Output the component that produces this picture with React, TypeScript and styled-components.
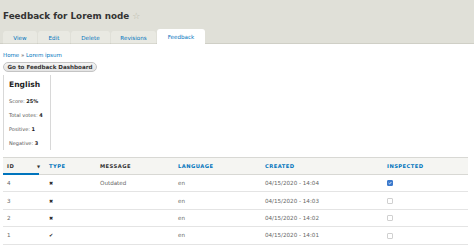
import React from "react";
import styled, { createGlobalStyle } from "styled-components";

const Global = createGlobalStyle`
  html, body { margin: 0; padding: 0; background: #fff; }
  body { font-family: "DejaVu Sans", Verdana, sans-serif; color: #333; width: 474px; height: 250px; overflow: hidden; }
`;

const Header = styled.div`
  background: #e0e0d8;
  height: 44px;
  border-bottom: 1px solid #cfcfc6;
  display: flex;
  flex-direction: column;
  justify-content: space-between;
  padding: 0 3px;
  box-sizing: border-box;
`;

const Title = styled.h1`
  margin: 10px 0 0 0;
  font-size: 8.8px;
  font-weight: bold;
  color: #333;
  line-height: 12px;
  display: flex;
  align-items: center;
  gap: 3px;
`;

const Star = styled.span`
  font-size: 9px;
  color: #b8b8a8;
  font-weight: normal;
`;

const Tabs = styled.ul`
  list-style: none;
  margin: 0 0 -1px 0;
  padding: 0;
  display: flex;
  gap: 1px;
`;

const Tab = styled.li<{ $active?: boolean; $w: number }>`
  width: ${(p) => p.$w}px;
  height: ${(p) => (p.$active ? 15 : 13)}px;
  margin-top: ${(p) => (p.$active ? 0 : 2)}px;
  background: ${(p) => (p.$active ? "#fff" : "#e9e9e2")};
  border-radius: 3px 3px 0 0;
  display: flex;
  align-items: center;
  justify-content: center;
  font-size: 5.6px;
  color: #0074bd;
  box-shadow: ${(p) => (p.$active ? "none" : "inset 0 -1px 0 #d8d8cf")};
`;

const Main = styled.div`
  padding: 8px 3px 0 3px;
`;

const Breadcrumb = styled.div`
  font-size: 5.5px;
  color: #0074bd;
  line-height: 7px;
  span { color: #666; }
`;

const Button = styled.button`
  margin-top: 3px;
  height: 10px;
  padding: 0;
  border: 1px solid #c4c4c4;
  border-radius: 6px;
  background: linear-gradient(#f4f4f4, #e4e4e4);
  font-family: "DejaVu Sans", Verdana, sans-serif;
  font-size: 5.6px;
  font-weight: bold;
  color: #333;
  display: flex;
  align-items: center;
  box-sizing: border-box;
  width: 94px;
  justify-content: center;
  white-space: nowrap;
`;

const LangBox = styled.div`
  margin-top: 3px;
  width: 48px;
  box-sizing: border-box;
  border-left: 1px solid #d8d8d8;
  border-right: 1px solid #d8d8d8;
  padding: 5px 0 4px 5px;
  height: 75px;
`;

const LangTitle = styled.div`
  font-size: 7.6px;
  font-weight: bold;
  color: #222;
  line-height: 10px;
  margin-bottom: 4px;
`;

const Stat = styled.div`
  font-size: 5px;
  color: #555;
  line-height: 14px;
  b { color: #222; }
`;

const Table = styled.table`
  margin-top: 7px;
  width: 465px;
  border-collapse: collapse;
  table-layout: fixed;
`;

const Th = styled.th<{ $link?: boolean; $active?: boolean }>`
  background: #f5f5f2;
  border-top: 1px solid #d8d8d4;
  border-bottom: 1px solid #d8d8d4;
  height: 16px;
  text-align: left;
  padding: 0 0 0 4px;
  font-size: 5.2px;
  letter-spacing: 0.45px;
  font-weight: bold;
  text-transform: uppercase;
  color: ${(p) => (p.$link ? "#0074bd" : "#333")};
  position: relative;
  ${(p) =>
    p.$active
      ? `&::after { content: ""; position: absolute; left: 0; bottom: -1px; width: 36px; height: 2px; background: #0074bd; }`
      : ""}
`;

const SortArrow = styled.span`
  position: absolute;
  left: 34px;
  top: 6px;
  font-size: 4px;
  color: #333;
`;

const Td = styled.td`
  height: 16.4px;
  border-bottom: 1px solid #e4e4e4;
  padding: 0 0 0 4px;
  font-size: 5.6px;
  color: #666;
`;

const TypeIcon = styled.span`
  font-size: 5px;
  color: #222;
`;

const Check = styled.span<{ $checked?: boolean }>`
  display: inline-flex;
  width: 6px;
  height: 6px;
  box-sizing: border-box;
  border-radius: 1px;
  border: 1px solid ${(p) => (p.$checked ? "#3b79cc" : "#d0d0d0")};
  background: ${(p) => (p.$checked ? "#3b79cc" : "#fff")};
  align-items: center;
  justify-content: center;
  vertical-align: middle;
`;

const rows = [
  { id: 4, type: "✖", msg: "Outdated", lang: "en", created: "04/15/2020 - 14:04", inspected: true },
  { id: 3, type: "✖", msg: "", lang: "en", created: "04/15/2020 - 14:03", inspected: false },
  { id: 2, type: "✖", msg: "", lang: "en", created: "04/15/2020 - 14:02", inspected: false },
  { id: 1, type: "✔", msg: "", lang: "en", created: "04/15/2020 - 14:01", inspected: false },
];

const tabs = [
  { label: "View", w: 34 },
  { label: "Edit", w: 32 },
  { label: "Delete", w: 39 },
  { label: "Revisions", w: 45 },
  { label: "Feedback", w: 48, active: true },
];

export default function App() {
  return (
    <>
      <Global />
      <Header>
        <Title>
          Feedback for Lorem node <Star>☆</Star>
        </Title>
        <Tabs>
          {tabs.map((t) => (
            <Tab key={t.label} $w={t.w} $active={t.active}>
              {t.label}
            </Tab>
          ))}
        </Tabs>
      </Header>
      <Main>
        <Breadcrumb>
          Home <span>»</span> Lorem ipsum
        </Breadcrumb>
        <Button>Go to Feedback Dashboard</Button>
        <LangBox>
          <LangTitle>English</LangTitle>
          <Stat>
            Score: <b>25%</b>
          </Stat>
          <Stat>
            Total votes: <b>4</b>
          </Stat>
          <Stat>
            Positive: <b>1</b>
          </Stat>
          <Stat>
            Negative: <b>3</b>
          </Stat>
        </LangBox>
        <Table>
          <colgroup>
            <col style={{ width: 42 }} />
            <col style={{ width: 51 }} />
            <col style={{ width: 78 }} />
            <col style={{ width: 87 }} />
            <col style={{ width: 122 }} />
            <col style={{ width: 85 }} />
          </colgroup>
          <thead>
            <tr>
              <Th $active>
                ID<SortArrow>▼</SortArrow>
              </Th>
              <Th $link>Type</Th>
              <Th>Message</Th>
              <Th $link>Language</Th>
              <Th $link>Created</Th>
              <Th $link>Inspected</Th>
            </tr>
          </thead>
          <tbody>
            {rows.map((r) => (
              <tr key={r.id}>
                <Td>{r.id}</Td>
                <Td>
                  <TypeIcon>{r.type}</TypeIcon>
                </Td>
                <Td>{r.msg}</Td>
                <Td>{r.lang}</Td>
                <Td>{r.created}</Td>
                <Td>
                  <Check $checked={r.inspected}>
                    {r.inspected && (
                      <svg width="4" height="4" viewBox="0 0 10 10">
                        <path d="M1.5 5.2 L4 7.6 L8.6 2.4" stroke="#fff" strokeWidth="2" fill="none" />
                      </svg>
                    )}
                  </Check>
                </Td>
              </tr>
            ))}
          </tbody>
        </Table>
      </Main>
    </>
  );
}
